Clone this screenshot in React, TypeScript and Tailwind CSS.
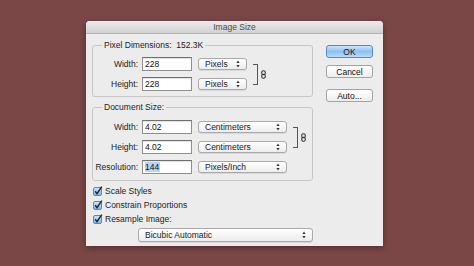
import type { ReactNode } from 'react';

const font = "font-['Liberation_Sans','Arial',sans-serif]";

function Arrows() {
  return (
    <svg width="4" height="8" viewBox="0 0 4 8" className="shrink-0">
      <path d="M2 0.5 L3.6 3 L0.4 3 Z" fill="#333" />
      <path d="M2 7.5 L3.6 5 L0.4 5 Z" fill="#333" />
    </svg>
  );
}

function Popup({ label, width, tall }: { label: string; width: string; tall?: boolean }) {
  return (
    <div
      className={`${width} ${tall ? 'h-[14px]' : 'h-[12px]'} flex items-center justify-between rounded-[3px] border border-[#a9a9a9] bg-gradient-to-b from-[#ffffff] to-[#ededed] pl-[6px] pr-[6px] shadow-[0_1px_0_rgba(0,0,0,0.08)]`}
    >
      <span className="text-[8.5px] leading-[10px] text-[#1c1c1c]">{label}</span>
      <Arrows />
    </div>
  );
}

function Field({ label, value, selected }: { label: string; value: string; selected?: boolean }) {
  return (
    <div className="flex h-[14px] items-center">
      <span className="w-[46px] pr-[1px] text-right text-[8.5px] leading-[10px] text-[#1c1c1c]">{label}</span>
      <div className="ml-[3px] flex h-[14px] w-[50px] items-center border border-[#8f8f8f] border-t-[#6f6f6f] bg-white pl-[2px] shadow-[inset_0_1px_1px_rgba(0,0,0,0.12)]">
        <span
          className={`text-[8.5px] leading-[10px] text-[#111] ${selected ? 'bg-[#b5d5fb] pr-[1px]' : ''}`}
        >
          {value}
        </span>
      </div>
    </div>
  );
}

function Chain() {
  return (
    <svg width="5" height="9" viewBox="0 0 5 9" className="shrink-0">
      <rect x="0.75" y="0.75" width="3.5" height="4" rx="1.6" fill="none" stroke="#333" strokeWidth="1.1" />
      <rect x="0.75" y="4.25" width="3.5" height="4" rx="1.6" fill="none" stroke="#333" strokeWidth="1.1" />
    </svg>
  );
}

function Group({ title, children, className }: { title: string; children: ReactNode; className: string }) {
  return (
    <fieldset className={`rounded-[3px] border border-[#c6c6c6] ${className}`}>
      <legend className="ml-[9px] whitespace-pre px-[2px] text-[8.5px] leading-[10px] text-[#1c1c1c]">{title}</legend>
      {children}
    </fieldset>
  );
}

function Check({ label }: { label: string }) {
  return (
    <div className="flex h-[14px] items-center">
      <svg width="10" height="10" viewBox="0 0 10 10" className="ml-[1px] shrink-0">
        <defs>
          <linearGradient id="cb" x1="0" y1="0" x2="0" y2="1">
            <stop offset="0" stopColor="#cfe6fb" />
            <stop offset="1" stopColor="#7fb6ea" />
          </linearGradient>
        </defs>
        <rect x="0.5" y="1.5" width="8" height="8" rx="1.5" fill="url(#cb)" stroke="#5e88b4" />
        <path d="M2.2 5.2 L4 7.6 L8.8 0.6" fill="none" stroke="#1d2a3a" strokeWidth="1.5" />
      </svg>
      <span className="ml-[2px] text-[8.5px] leading-[10px] text-[#1c1c1c]">{label}</span>
    </div>
  );
}

function Button({ label, primary, className }: { label: string; primary?: boolean; className: string }) {
  return (
    <div
      className={`flex h-[13px] w-[47px] items-center justify-center rounded-[3px] border text-[8.5px] leading-[10px] text-[#111] ${
        primary
          ? 'border-[#5a88c2] bg-gradient-to-b from-[#cde4fb] via-[#8cc2f3] to-[#b7dbfb]'
          : 'border-[#a3a3a3] bg-gradient-to-b from-[#ffffff] to-[#eeeeee]'
      } ${className}`}
    >
      {label}
    </div>
  );
}

export default function App() {
  return (
    <div className={`h-[266px] w-[474px] overflow-hidden bg-[#7b4646] pl-[86px] pt-[21px] ${font}`}>
      <div className="h-[225px] w-[297px] overflow-hidden rounded-t-[4px] bg-[#ececec] shadow-[0_2px_6px_rgba(0,0,0,0.35)]">
        <div className="h-[13px] border-b border-[#b3b3b3] bg-gradient-to-b from-[#ececec] to-[#d2d2d2] text-center text-[8.5px] leading-[12px] text-[#4a4a4a]">
          Image Size
        </div>
        <div className="flex pl-[6px]">
          <div className="w-[221px]">
            <Group title="Pixel Dimensions:  152.3K" className="mt-[6px] pb-[5px] pt-[7px]">
              <div className="flex items-center">
                <div className="flex flex-col gap-[6px]">
                  <div className="flex items-center">
                    <Field label="Width:" value="228" />
                    <div className="ml-[6px]">
                      <Popup label="Pixels" width="w-[49px]" />
                    </div>
                  </div>
                  <div className="flex items-center">
                    <Field label="Height:" value="228" />
                    <div className="ml-[6px]">
                      <Popup label="Pixels" width="w-[49px]" />
                    </div>
                  </div>
                </div>
                <div className="ml-[6px] h-[21px] w-[5px] border-y border-r border-[#555]" />
                <div className="ml-[3px]">
                  <Chain />
                </div>
              </div>
            </Group>
            <Group title="Document Size:" className="mt-[5px] pb-[6px] pt-[8px]">
              <div className="flex items-start">
                <div className="flex flex-col gap-[6px]">
                  <div className="flex items-center">
                    <Field label="Width:" value="4.02" />
                    <div className="ml-[6px]">
                      <Popup label="Centimeters" width="w-[89px]" />
                    </div>
                  </div>
                  <div className="flex items-center">
                    <Field label="Height:" value="4.02" />
                    <div className="ml-[6px]">
                      <Popup label="Centimeters" width="w-[89px]" />
                    </div>
                  </div>
                  <div className="flex items-center">
                    <Field label="Resolution:" value="144" selected />
                    <div className="ml-[6px]">
                      <Popup label="Pixels/Inch" width="w-[89px]" />
                    </div>
                  </div>
                </div>
                <div className="ml-[6px] mt-[7px] h-[21px] w-[5px] border-y border-r border-[#555]" />
                <div className="ml-[3px] mt-[13px]">
                  <Chain />
                </div>
              </div>
            </Group>
            <div className="mt-[3px]">
              <Check label="Scale Styles" />
              <Check label="Constrain Proportions" />
              <Check label="Resample Image:" />
            </div>
            <div className="ml-[46px] mt-[2px]">
              <Popup label="Bicubic Automatic" width="w-[175px]" tall />
            </div>
          </div>
          <div className="ml-[13px] flex flex-col">
            <Button label="OK" primary className="mt-[11px]" />
            <Button label="Cancel" className="mt-[7px]" />
            <Button label="Auto..." className="mt-[11px]" />
          </div>
        </div>
      </div>
    </div>
  );
}
